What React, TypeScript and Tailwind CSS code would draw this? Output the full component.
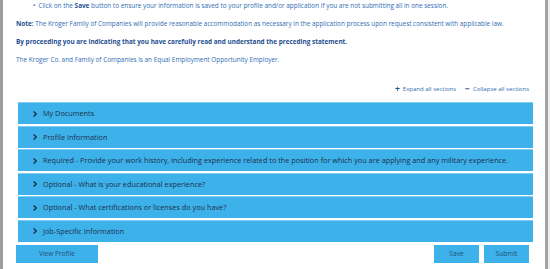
const sections = [
  'My Documents',
  'Profile Information',
  'Required - Provide your work history, including experience related to the position for which you are applying and any military experience.',
  'Optional - What is your educational experience?',
  'Optional - What certifications or licenses do you have?',
  'Job-Specific Information',
];

function Chevron() {
  return (
    <svg width="4" height="6" viewBox="0 0 4 6" className="shrink-0">
      <path d="M0.6 0.6 L3.2 3 L0.6 5.4" fill="none" stroke="#1c2f4a" strokeWidth="1.4" />
    </svg>
  );
}

export default function App() {
  return (
    <div
      className="flex h-[269px] w-[550px] overflow-hidden bg-white"
      style={{ fontFamily: '"Open Sans", "Liberation Sans", sans-serif' }}
    >
      <div className="w-[3px] shrink-0 bg-[#9c9c9c]" />
      <div className="flex flex-1 flex-col pl-[13px]">
        <div className="flex flex-col gap-[6px] text-[6.4px] text-[#2f6db5]">
          <p className="h-[12px] whitespace-nowrap pl-[17px] leading-[12px]">
            <span className="mr-[3px]">•</span>
            Click on the <span className="font-bold text-[#1f4f8f]">Save</span> button to ensure your
            information is saved to your profile and/or application if you are not submitting all in
            one session.
          </p>
          <p className="h-[12px] whitespace-nowrap leading-[12px]">
            <span className="font-bold text-[#1f4f8f]">Note:</span> The Kroger Family of Companies
            will provide reasonable accommodation as necessary in the application process upon
            request consistent with applicable law.
          </p>
          <p className="h-[12px] whitespace-nowrap font-bold leading-[12px] text-[#1d4f90]">
            By proceeding you are indicating that you have carefully read and understand the
            preceding statement.
          </p>
          <p className="h-[12px] whitespace-nowrap leading-[12px]">
            The Kroger Co. and Family of Companies is an Equal Employment Opportunity Employer.
          </p>
        </div>

        <div className="mt-[17px] flex h-[12px] w-[513px] items-center justify-end gap-[9px] text-[6px] leading-[12px] text-[#2f6db5]">
          <span className="flex items-center gap-[3px]">
            <span className="text-[8.5px] font-bold leading-none text-[#1f4f8f]">+</span>
            Expand all sections
          </span>
          <span className="flex items-center gap-[3px]">
            <span className="text-[8.5px] font-bold leading-none text-[#1f4f8f]">−</span>
            Collapse all sections
          </span>
        </div>

        <div className="ml-[2px] mt-[7px] flex w-[515px] flex-col gap-[1.5px]">
          {sections.map((s) => (
            <div
              key={s}
              className="flex h-[22px] items-center gap-[6px] border-t border-[#7fcbf2] bg-[#3db2ea] pl-[15px] text-[7.3px] text-[#1c2f4a]"
            >
              <Chevron />
              <span className="whitespace-nowrap">{s}</span>
            </div>
          ))}
        </div>

        <div className="mt-[3.5px] flex w-[513px] items-center">
          <button className="h-[18px] w-[82px] bg-[#3db2ea] text-[6.6px] text-[#234f7a]">
            View Profile
          </button>
          <div className="flex-1" />
          <button className="h-[18px] w-[45px] bg-[#3db2ea] text-[6.6px] text-[#234f7a]">Save</button>
          <button className="ml-[5px] h-[18px] w-[45px] bg-[#3db2ea] text-[6.6px] text-[#234f7a]">
            Submit
          </button>
        </div>
      </div>
      <div className="w-[3px] shrink-0 bg-[#a3a3a3]" />
      <div className="w-[2px] shrink-0 bg-[#eeeeee]" />
    </div>
  );
}
